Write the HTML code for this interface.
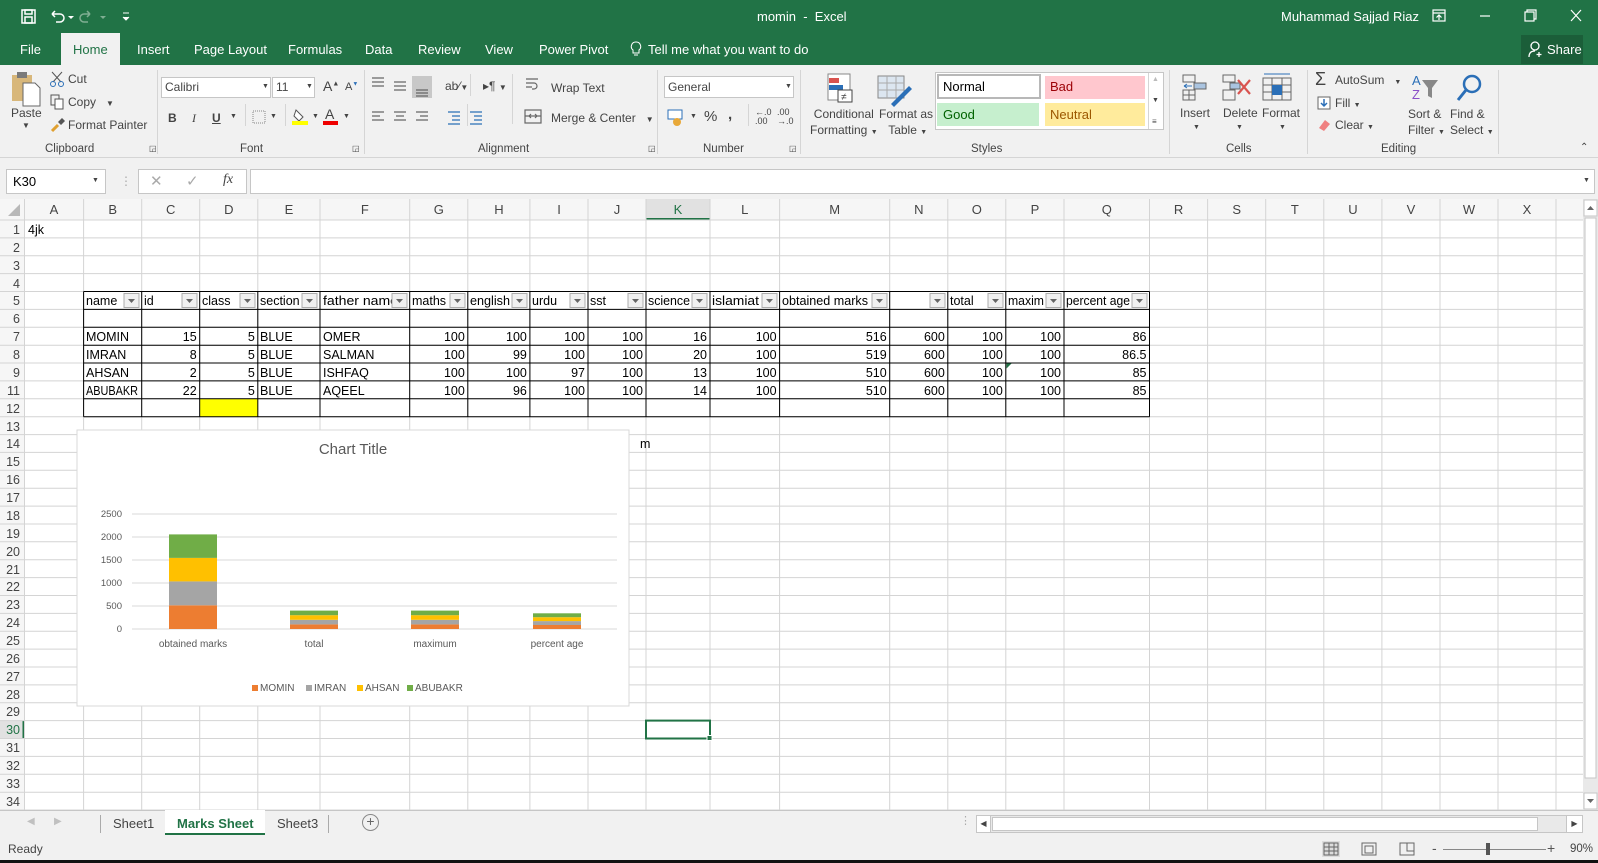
<!DOCTYPE html>
<html><head><meta charset="utf-8"><style>
*{margin:0;padding:0;box-sizing:border-box}
body{width:1598px;height:863px;overflow:hidden;background:#f1f1f1;font-family:"Liberation Sans",sans-serif;position:relative;color:#444}
.a{position:absolute;white-space:nowrap}
.w{color:#fff}
.f13{font-size:13px}.f12{font-size:12px}.f11{font-size:11.5px}
.box{position:absolute;background:#fff;border:1px solid #c6c6c6}
.sep{position:absolute;width:1px;background:#d5d5d5;top:70px;height:84px}
.ico{position:absolute}
</style></head><body>
<div class="a" style="left:0;top:0;width:1598px;height:65px;background:#217346"></div>
<svg class="ico" style="left:20px;top:8px" width="120" height="18" viewBox="0 0 120 18">
<g fill="none" stroke="#fff" stroke-width="1.5"><rect x="2" y="2" width="13" height="13"/><rect x="5" y="2" width="7" height="4"/><rect x="5" y="9" width="7" height="6"/>
<path d="M32 6h8a4 4 0 0 1 0 8h-4M32 6l3-3M32 6l3 3"/></g>
<path d="M48 8l3 3 3-3" fill="#fff"/><path d="M70 6h-6a4 4 0 0 0 0 8h4M70 6l-3-3M70 6l-3 3" fill="none" stroke="#7fae92" stroke-width="1.5"/><path d="M80 8l3 3 3-3" fill="#7fae92"/>
<path d="M103 5h6M103 9l3 3 3-3" stroke="#fff" fill="#fff"/></svg>
<div class="a w f13" style="left:757px;top:9px">momin&nbsp; -&nbsp; Excel</div>
<div class="a w f13" style="left:1281px;top:9px">Muhammad Sajjad Riaz</div>
<svg class="ico" style="left:1430px;top:6px" width="160" height="20"><g fill="none" stroke="#fff" stroke-width="1.2"><rect x="3" y="4" width="12" height="11"/><path d="M3 7h12M9 14V9M6.5 11.5L9 9l2.5 2.5"/><path d="M50 10h10"/><rect x="95" y="6" width="9" height="9"/><path d="M97 6V4h9v9h-2"/><path d="M141 4l10 11M151 4l-10 11"/></g></svg>
<div class="a" style="left:61px;top:33px;width:59px;height:32px;background:#f1f1f1"></div>
<div class="a w f13" style="left:20px;top:42px">File</div>
<div class="a f13" style="left:73px;top:42px;color:#217346">Home</div>
<div class="a w f13" style="left:137px;top:42px">Insert</div>
<div class="a w f13" style="left:194px;top:42px">Page Layout</div>
<div class="a w f13" style="left:288px;top:42px">Formulas</div>
<div class="a w f13" style="left:365px;top:42px">Data</div>
<div class="a w f13" style="left:418px;top:42px">Review</div>
<div class="a w f13" style="left:485px;top:42px">View</div>
<div class="a w f13" style="left:539px;top:42px">Power Pivot</div>
<svg class="ico" style="left:630px;top:41px" width="12" height="16"><path d="M6 1a4.5 4.5 0 0 0-3 8v3h6V9a4.5 4.5 0 0 0-3-8zM4 14h4" fill="none" stroke="#fff"/></svg>
<div class="a w f13" style="left:648px;top:42px">Tell me what you want to do</div>
<div class="a" style="left:1521px;top:35px;width:62px;height:29px;background:#1b5e39"></div>
<svg class="ico" style="left:1528px;top:41px" width="16" height="17"><circle cx="7" cy="5" r="4" fill="none" stroke="#fff" stroke-width="1.3"/><path d="M1 16c0-5 3-6 6-6M11 11v5M8.5 13.5h5" fill="none" stroke="#fff" stroke-width="1.3"/></svg>
<div class="a w f13" style="left:1547px;top:42px">Share</div>
<div class="a" style="left:0;top:157px;width:1598px;height:1px;background:#d5d5d5"></div>
<svg class="ico" style="left:10px;top:70px" width="34" height="40"><rect x="2" y="5" width="20" height="26" fill="#d8b77a"/><rect x="7" y="2" width="10" height="6" fill="#7a7a7a"/><path d="M13 13h12l5 5v18H13z" fill="#fff" stroke="#666"/></svg>
<div class="a f12" style="left:11px;top:106px">Paste</div><div class="a" style="left:22px;top:121px;font-size:8px">▼</div>
<svg class="ico" style="left:49px;top:71px" width="16" height="16"><path d="M3 1l9 10M13 1L4 11" stroke="#555" fill="none"/><circle cx="4" cy="13" r="2.5" fill="none" stroke="#2b6fb7"/><circle cx="12" cy="13" r="2.5" fill="none" stroke="#2b6fb7"/></svg>
<div class="a f12" style="left:68px;top:72px">Cut</div>
<svg class="ico" style="left:49px;top:94px" width="16" height="16"><rect x="2" y="1" width="8" height="10" fill="none" stroke="#555"/><rect x="6" y="5" width="8" height="10" fill="#fff" stroke="#555"/></svg>
<div class="a f12" style="left:68px;top:95px">Copy&nbsp;&nbsp;&nbsp;<span style="font-size:8px">▼</span></div>
<svg class="ico" style="left:50px;top:117px" width="16" height="16"><path d="M2 14l6-6" stroke="#e0a030" stroke-width="3"/><path d="M8 5l4-4 3 3-4 4z" fill="#555"/></svg>
<div class="a f12" style="left:68px;top:118px">Format Painter</div>
<div class="a f11" style="left:45px;top:143px">Clipboard</div>
<div class="a" style="left:149px;top:144px;font-size:8px">◲</div>
<div class="sep" style="left:157px"></div>
<div class="box" style="left:161px;top:77px;width:110px;height:21px"></div><div class="a f12" style="left:165px;top:80px">Calibri</div><div class="a" style="left:262px;top:83px;font-size:7px">▼</div>
<div class="box" style="left:272px;top:77px;width:43px;height:21px"></div><div class="a f12" style="left:276px;top:80px">11</div><div class="a" style="left:306px;top:83px;font-size:7px">▼</div>
<div class="a" style="left:323px;top:78px;font-size:14px">A<sup style="font-size:7px">▲</sup></div><div class="a" style="left:345px;top:81px;font-size:11px">A<sup style="font-size:6px;color:#2b6fb7">▼</sup></div>
<div class="a f12" style="left:168px;top:111px;font-weight:bold">B</div>
<div class="a f12" style="left:192px;top:111px;font-style:italic;font-family:'Liberation Serif'">I</div>
<div class="a f12" style="left:212px;top:111px;text-decoration:underline;font-weight:bold">U</div><div class="a" style="left:230px;top:113px;font-size:7px">▼</div>
<div class="a" style="left:245px;top:104px;width:1px;height:22px;background:#d5d5d5"></div>
<svg class="ico" style="left:252px;top:110px" width="14" height="14"><rect x="1" y="1" width="12" height="12" fill="none" stroke="#888" stroke-dasharray="1 1"/></svg><div class="a" style="left:270px;top:113px;font-size:7px">▼</div>
<div class="a" style="left:285px;top:104px;width:1px;height:22px;background:#d5d5d5"></div>
<svg class="ico" style="left:291px;top:107px" width="18" height="18"><path d="M5 3l7 7-4 4-5-5z" fill="#fff" stroke="#555"/><rect x="1" y="14" width="16" height="4" fill="#ffff00"/></svg><div class="a" style="left:312px;top:113px;font-size:7px">▼</div>
<div class="a" style="left:325px;top:106px;font-size:14px">A</div><div class="a" style="left:323px;top:121px;width:15px;height:4px;background:#e00"></div><div class="a" style="left:343px;top:113px;font-size:7px">▼</div>
<div class="a f11" style="left:240px;top:143px">Font</div><div class="a" style="left:352px;top:144px;font-size:8px">◲</div>
<div class="sep" style="left:364px"></div>
<svg class="ico" style="left:368px;top:74px" width="290" height="55"><g stroke="#666" stroke-width="1.2" fill="none">
<path d="M4 4h12M4 8h12M4 12h12"/><path d="M26 8h12M26 12h12M26 16h12"/><rect x="44" y="2" width="20" height="22" fill="#c8c8c8" stroke="none"/><path d="M48 16h12M48 19h12M48 22h12"/>
<path d="M4 38h12M4 42h8M4 46h12M26 38h12M28 42h8M26 46h12M48 38h12M52 42h8M48 46h12"/>
<path d="M80 38h12M84 42h8M84 46h8M80 50h12M102 38h12M106 42h8M106 46h8M102 50h12" stroke="#2b6fb7"/>
<path d="M158 5h12M158 9h8M158 13h6M166 9a3 3 0 0 1 0 6h-2"/><rect x="157" y="36" width="16" height="13"/><path d="M157 42h16M161 42l2-2M161 42l2 2M169 42l-2-2M169 42l-2 2"/></g></svg>
<div class="a f12" style="left:445px;top:79px">ab⁄<span style="font-size:8px">▼</span></div>
<div class="a f12" style="left:483px;top:79px">▸¶ <span style="font-size:8px">▼</span></div>
<div class="a" style="left:470px;top:74px;width:1px;height:22px;background:#d5d5d5"></div>
<div class="a" style="left:512px;top:74px;width:1px;height:50px;background:#d5d5d5"></div>
<div class="a" style="left:467px;top:104px;width:1px;height:22px;background:#d5d5d5"></div>
<div class="a f12" style="left:551px;top:81px">Wrap Text</div>
<div class="a f12" style="left:551px;top:111px">Merge &amp; Center&nbsp;&nbsp;&nbsp;<span style="font-size:8px">▼</span></div>
<div class="a f11" style="left:478px;top:143px">Alignment</div><div class="a" style="left:648px;top:144px;font-size:8px">◲</div>
<div class="sep" style="left:657px"></div>
<div class="box" style="left:664px;top:76px;width:130px;height:22px"></div><div class="a f12" style="left:668px;top:80px">General</div><div class="a" style="left:785px;top:83px;font-size:7px">▼</div>
<svg class="ico" style="left:667px;top:109px" width="22" height="18"><rect x="1" y="1" width="14" height="9" fill="#fff" stroke="#2b6fb7"/><circle cx="10" cy="13" r="4" fill="#e8a838"/></svg><div class="a" style="left:690px;top:113px;font-size:7px">▼</div>
<div class="a" style="left:704px;top:108px;font-size:15px">%</div><div class="a" style="left:728px;top:106px;font-size:15px;font-weight:bold">,</div>
<div class="a" style="left:748px;top:104px;width:1px;height:22px;background:#d5d5d5"></div>
<div class="a" style="left:755px;top:108px;font-size:9px;line-height:9px">←.0<br>.00</div><div class="a" style="left:777px;top:108px;font-size:9px;line-height:9px">.00<br>→.0</div>
<div class="a f11" style="left:703px;top:143px">Number</div><div class="a" style="left:789px;top:144px;font-size:8px">◲</div>
<div class="sep" style="left:800px"></div>
<svg class="ico" style="left:826px;top:72px" width="90" height="36"><rect x="2" y="2" width="22" height="26" fill="#fff" stroke="#888"/><rect x="3" y="6" width="10" height="5" fill="#d9534f"/><rect x="3" y="13" width="14" height="5" fill="#2b6fb7"/><rect x="12" y="18" width="14" height="12" fill="#fff" stroke="#444"/><text x="15" y="28" font-size="10" fill="#444">≠</text>
<rect x="52" y="4" width="26" height="22" fill="#dce6f0" stroke="#888"/><path d="M52 11h26M52 18h26M61 4v22M70 4v22" stroke="#aaa"/><path d="M65 32l18-18 3 3-18 18z" fill="#2b6fb7"/></svg>
<div class="a f12" style="left:810px;top:106px;text-align:center;line-height:16px">Conditional<br>Formatting <span style="font-size:7px">▼</span></div>
<div class="a f12" style="left:879px;top:106px;text-align:center;line-height:16px">Format as<br>&nbsp;Table <span style="font-size:7px">▼</span></div>
<div class="a" style="left:935px;top:72px;width:229px;height:58px;background:#fff;border:1px solid #c6c6c6"></div>
<div class="a" style="left:937px;top:74px;width:104px;height:25px;background:#fff;border:2px solid #b8b8b8"></div><div class="a f13" style="left:943px;top:79px;color:#000">Normal</div>
<div class="a" style="left:1045px;top:76px;width:100px;height:23px;background:#ffc7ce"></div><div class="a f13" style="left:1050px;top:79px;color:#9c0006">Bad</div>
<div class="a" style="left:937px;top:103px;width:102px;height:23px;background:#c6efce"></div><div class="a f13" style="left:943px;top:107px;color:#006100">Good</div>
<div class="a" style="left:1045px;top:103px;width:100px;height:23px;background:#ffeb9c"></div><div class="a f13" style="left:1050px;top:107px;color:#9c5700">Neutral</div>
<div class="a" style="left:1148px;top:73px;width:1px;height:56px;background:#d5d5d5"></div>
<div class="a" style="left:1152px;top:76px;font-size:7px;color:#bbb">▲</div><div class="a" style="left:1152px;top:97px;font-size:7px">▼</div><div class="a" style="left:1152px;top:117px;font-size:8px">≡</div>
<div class="a f11" style="left:971px;top:143px">Styles</div>
<div class="sep" style="left:1169px"></div>
<svg class="ico" style="left:1180px;top:72px" width="130" height="32"><g fill="none" stroke="#666"><rect x="3" y="3" width="12" height="7"/><rect x="3" y="18" width="12" height="10"/><path d="M3 23h12M9 18v10"/><rect x="14" y="11" width="12" height="6" fill="#aac4e0"/></g><path d="M4 14h8M4 14l3-2M4 14l3 2" stroke="#2b6fb7"/>
<g fill="none" stroke="#666"><rect x="43" y="3" width="12" height="7"/><rect x="43" y="18" width="12" height="10"/><rect x="50" y="11" width="10" height="6" fill="#aac4e0"/></g><path d="M58 8l12 14M70 8L58 22" stroke="#d9534f" stroke-width="2.2"/>
<g fill="none" stroke="#666"><rect x="83" y="6" width="28" height="22"/><path d="M83 13h28M83 20h28M92 6v22M102 6v22"/></g><rect x="92" y="13" width="10" height="10" fill="#2b6fb7"/><path d="M84 2h26" stroke="#2b6fb7"/></svg>
<div class="a f12" style="left:1180px;top:106px">Insert</div><div class="a" style="left:1193px;top:124px;font-size:7px">▼</div>
<div class="a f12" style="left:1223px;top:106px">Delete</div><div class="a" style="left:1236px;top:124px;font-size:7px">▼</div>
<div class="a f12" style="left:1262px;top:106px">Format</div><div class="a" style="left:1279px;top:124px;font-size:7px">▼</div>
<div class="a f11" style="left:1226px;top:143px">Cells</div>
<div class="sep" style="left:1307px"></div>
<div class="a" style="left:1315px;top:69px;font-size:18px">Σ</div><div class="a f12" style="left:1335px;top:73px">AutoSum&nbsp;&nbsp;&nbsp;<span style="font-size:7px">▼</span></div>
<svg class="ico" style="left:1317px;top:96px" width="14" height="14"><rect x="1" y="1" width="12" height="12" fill="#fff" stroke="#666"/><path d="M7 3v7M4 7l3 3 3-3" stroke="#2b6fb7" fill="none" stroke-width="1.5"/></svg><div class="a f12" style="left:1335px;top:96px">Fill <span style="font-size:7px">▼</span></div>
<svg class="ico" style="left:1317px;top:118px" width="14" height="14"><path d="M2 10l6-8 5 4-6 7z" fill="#f08080"/></svg><div class="a f12" style="left:1335px;top:118px">Clear <span style="font-size:7px">▼</span></div>
<svg class="ico" style="left:1410px;top:72px" width="80" height="32"><text x="2" y="13" font-size="13" fill="#2b6fb7" font-family="Liberation Sans">A</text><text x="2" y="27" font-size="13" fill="#8a4fc8" font-family="Liberation Sans">Z</text><path d="M12 8h16l-6 8v10l-4-2v-8z" fill="#888"/><circle cx="62" cy="12" r="8" fill="none" stroke="#2b6fb7" stroke-width="2.5"/><path d="M56 18l-8 10" stroke="#2b6fb7" stroke-width="3"/></svg>
<div class="a f12" style="left:1408px;top:106px;line-height:16px">Sort &amp;<br>Filter <span style="font-size:7px">▼</span></div>
<div class="a f12" style="left:1450px;top:106px;line-height:16px">Find &amp;<br>Select <span style="font-size:7px">▼</span></div>
<div class="a f11" style="left:1381px;top:143px">Editing</div>
<div class="sep" style="left:1498px"></div>
<div class="a" style="left:1580px;top:142px;font-size:10px">⌃</div>
<div class="box" style="left:6px;top:169px;width:100px;height:25px"></div><div class="a f13" style="left:13px;top:174px;color:#000">K30</div><div class="a" style="left:92px;top:177px;font-size:7px">▼</div>
<div class="a" style="left:120px;top:174px;color:#aaa;font-size:12px">⋮</div>
<div class="box" style="left:138px;top:169px;width:109px;height:25px"></div>
<div class="a" style="left:150px;top:172px;color:#aaa;font-size:15px">✕</div><div class="a" style="left:186px;top:172px;color:#aaa;font-size:15px">✓</div><div class="a" style="left:223px;top:172px;font-style:italic;font-family:'Liberation Serif';font-size:14px">fx</div>
<div class="box" style="left:250px;top:169px;width:1345px;height:25px"></div><div class="a" style="left:1583px;top:177px;font-size:7px">▼</div>
<svg class="ico" style="left:0;top:0" width="1598" height="863" viewBox="0 0 1598 863" font-family="Liberation Sans" font-size="12.5">
<rect x="0" y="199" width="1583" height="611" fill="#fff"/>
<rect x="0" y="199" width="1583" height="21" fill="#f6f6f6"/>
<rect x="0" y="220" width="24.5" height="590" fill="#f6f6f6"/>
<rect x="646" y="199" width="64" height="21" fill="#e1e1e1"/><rect x="646" y="218" width="64" height="2" fill="#217346"/>
<rect x="0" y="720.6" width="24.5" height="17.9" fill="#e1e1e1"/><rect x="22.5" y="720.6" width="2" height="17.9" fill="#217346"/>
<path d="M20 204v12h-12z" fill="#b8b8b8"/>
<g stroke="#d4d4d4" stroke-width="1">
<path d="M24.5 199V810M83.6 199V810M141.7 199V810M199.7 199V810M257.8 199V810M320 199V810M409.7 199V810M467.8 199V810M529.9 199V810M588 199V810M646 199V810M710 199V810M779.6 199V810M889.7 199V810M947.8 199V810M1005.8 199V810M1064 199V810M1149.5 199V810M1207.6 199V810M1265.7 199V810M1323.8 199V810M1381.9 199V810M1440 199V810M1498 199V810M1556 199V810"/>
<path d="M0 220H1583M0 237.9H1583M0 255.8H1583M0 273.6H1583M0 291.5H1583M0 309.4H1583M0 327.3H1583M0 345.2H1583M0 363H1583M0 380.9H1583M0 398.8H1583M0 416.7H1583M0 434.6H1583M0 452.4H1583M0 470.3H1583M0 488.2H1583M0 506.1H1583M0 524H1583M0 541.8H1583M0 559.7H1583M0 577.6H1583M0 595.5H1583M0 613.4H1583M0 631.2H1583M0 649.1H1583M0 667H1583M0 684.9H1583M0 702.8H1583M0 720.6H1583M0 738.5H1583M0 756.4H1583M0 774.3H1583M0 792.2H1583M0 810H1583"/>
</g>
<g fill="#444" text-anchor="middle" font-size="13">
<text x="54" y="214">A</text><text x="112.7" y="214">B</text><text x="170.7" y="214">C</text><text x="228.8" y="214">D</text><text x="289" y="214">E</text><text x="364.9" y="214">F</text><text x="438.8" y="214">G</text><text x="498.9" y="214">H</text><text x="559" y="214">I</text><text x="617" y="214">J</text><text x="678" y="214" fill="#217346">K</text><text x="744.8" y="214">L</text><text x="834.7" y="214">M</text><text x="918.8" y="214">N</text><text x="976.8" y="214">O</text><text x="1034.9" y="214">P</text><text x="1106.8" y="214">Q</text><text x="1178.6" y="214">R</text><text x="1236.7" y="214">S</text><text x="1294.8" y="214">T</text><text x="1352.9" y="214">U</text><text x="1411" y="214">V</text><text x="1469" y="214">W</text><text x="1527" y="214">X</text>
</g>
<g fill="#444" text-anchor="end" font-size="12.5">
<text x="20" y="234">1</text><text x="20" y="252">2</text><text x="20" y="270">3</text><text x="20" y="288">4</text><text x="20" y="305">5</text><text x="20" y="323">6</text><text x="20" y="341">7</text><text x="20" y="359">8</text><text x="20" y="377">9</text><text x="20" y="395">11</text><text x="20" y="413">12</text><text x="20" y="431">13</text><text x="20" y="448">14</text><text x="20" y="466">15</text><text x="20" y="484">16</text><text x="20" y="502">17</text><text x="20" y="520">18</text><text x="20" y="538">19</text><text x="20" y="556">20</text><text x="20" y="574">21</text><text x="20" y="591">22</text><text x="20" y="609">23</text><text x="20" y="627">24</text><text x="20" y="645">25</text><text x="20" y="663">26</text><text x="20" y="681">27</text><text x="20" y="699">28</text><text x="20" y="716">29</text><text x="20" y="734" fill="#217346">30</text><text x="20" y="752">31</text><text x="20" y="770">32</text><text x="20" y="788">33</text><text x="20" y="806">34</text>
</g>
<rect x="199.7" y="398.8" width="58.1" height="17.9" fill="#ffff00"/>
<g stroke="#000" stroke-width="1">
<path d="M83.6 291.5V416.7M141.7 291.5V416.7M199.7 291.5V416.7M257.8 291.5V416.7M320 291.5V416.7M409.7 291.5V416.7M467.8 291.5V416.7M529.9 291.5V416.7M588 291.5V416.7M646 291.5V416.7M710 291.5V416.7M779.6 291.5V416.7M889.7 291.5V416.7M947.8 291.5V416.7M1005.8 291.5V416.7M1064 291.5V416.7M1149.5 291.5V416.7"/>
<path d="M83.6 291.5H1149.5M83.6 309.4H1149.5M83.6 327.3H1149.5M83.6 345.2H1149.5M83.6 363H1149.5M83.6 380.9H1149.5M83.6 398.8H1149.5M83.6 416.7H1149.5"/>
</g>
<g fill="#000">
<text x="28" y="234">4jk</text>
<text x="86" y="305">name</text><text x="144" y="305">id</text><text x="202" y="305">class</text><text x="260" y="305">section</text><text x="323" y="305" textLength="75" lengthAdjust="spacingAndGlyphs">father name</text><text x="412" y="305">maths</text><text x="470" y="305" textLength="40" lengthAdjust="spacingAndGlyphs">english</text><text x="532" y="305">urdu</text><text x="590" y="305">sst</text><text x="648" y="305" textLength="42" lengthAdjust="spacingAndGlyphs">science</text><text x="712" y="305" textLength="47" lengthAdjust="spacingAndGlyphs">islamiat</text><text x="782" y="305" textLength="86" lengthAdjust="spacingAndGlyphs">obtained marks</text><text x="950" y="305">total</text><text x="1008" y="305" textLength="36" lengthAdjust="spacingAndGlyphs">maxim</text><text x="1066" y="305" textLength="64" lengthAdjust="spacingAndGlyphs">percent age</text>
<text x="86" y="341">MOMIN</text><text x="86" y="359">IMRAN</text><text x="86" y="377">AHSAN</text><text x="86" y="395" textLength="52" lengthAdjust="spacingAndGlyphs">ABUBAKR</text>
<text x="260" y="341">BLUE</text><text x="260" y="359">BLUE</text><text x="260" y="377">BLUE</text><text x="260" y="395">BLUE</text>
<text x="323" y="341">OMER</text><text x="323" y="359">SALMAN</text><text x="323" y="377">ISHFAQ</text><text x="323" y="395">AQEEL</text>
<text x="640" y="448">m</text>
</g>
<g fill="#f0f0f0" stroke="#acacac">
<rect x="124" y="293.5" width="15" height="14"/><rect x="182" y="293.5" width="15" height="14"/><rect x="240" y="293.5" width="15" height="14"/><rect x="302" y="293.5" width="15" height="14"/><rect x="392" y="293.5" width="15" height="14"/><rect x="450" y="293.5" width="15" height="14"/><rect x="512" y="293.5" width="15" height="14"/><rect x="570" y="293.5" width="15" height="14"/><rect x="628" y="293.5" width="15" height="14"/><rect x="692" y="293.5" width="15" height="14"/><rect x="762" y="293.5" width="15" height="14"/><rect x="872" y="293.5" width="15" height="14"/><rect x="930" y="293.5" width="15" height="14"/><rect x="988" y="293.5" width="15" height="14"/><rect x="1046" y="293.5" width="15" height="14"/><rect x="1132" y="293.5" width="15" height="14"/>
</g>
<g fill="#666">
<path d="M128 299h7l-3.5 4z"/><path d="M186 299h7l-3.5 4z"/><path d="M244 299h7l-3.5 4z"/><path d="M306 299h7l-3.5 4z"/><path d="M396 299h7l-3.5 4z"/><path d="M454 299h7l-3.5 4z"/><path d="M516 299h7l-3.5 4z"/><path d="M574 299h7l-3.5 4z"/><path d="M632 299h7l-3.5 4z"/><path d="M696 299h7l-3.5 4z"/><path d="M766 299h7l-3.5 4z"/><path d="M876 299h7l-3.5 4z"/><path d="M934 299h7l-3.5 4z"/><path d="M992 299h7l-3.5 4z"/><path d="M1050 299h7l-3.5 4z"/><path d="M1136 299h7l-3.5 4z"/>
</g>
<g fill="#000" text-anchor="end">
<text x="196.7" y="341">15</text><text x="196.7" y="359">8</text><text x="196.7" y="377">2</text><text x="196.7" y="395">22</text>
<text x="254.8" y="341">5</text><text x="254.8" y="359">5</text><text x="254.8" y="377">5</text><text x="254.8" y="395">5</text>
<text x="464.8" y="341">100</text><text x="464.8" y="359">100</text><text x="464.8" y="377">100</text><text x="464.8" y="395">100</text>
<text x="526.9" y="341">100</text><text x="526.9" y="359">99</text><text x="526.9" y="377">100</text><text x="526.9" y="395">96</text>
<text x="585" y="341">100</text><text x="585" y="359">100</text><text x="585" y="377">97</text><text x="585" y="395">100</text>
<text x="643" y="341">100</text><text x="643" y="359">100</text><text x="643" y="377">100</text><text x="643" y="395">100</text>
<text x="707" y="341">16</text><text x="707" y="359">20</text><text x="707" y="377">13</text><text x="707" y="395">14</text>
<text x="776.6" y="341">100</text><text x="776.6" y="359">100</text><text x="776.6" y="377">100</text><text x="776.6" y="395">100</text>
<text x="886.7" y="341">516</text><text x="886.7" y="359">519</text><text x="886.7" y="377">510</text><text x="886.7" y="395">510</text>
<text x="944.8" y="341">600</text><text x="944.8" y="359">600</text><text x="944.8" y="377">600</text><text x="944.8" y="395">600</text>
<text x="1002.8" y="341">100</text><text x="1002.8" y="359">100</text><text x="1002.8" y="377">100</text><text x="1002.8" y="395">100</text>
<text x="1061" y="341">100</text><text x="1061" y="359">100</text><text x="1061" y="377">100</text><text x="1061" y="395">100</text>
<text x="1146.5" y="341">86</text><text x="1146.5" y="359">86.5</text><text x="1146.5" y="377">85</text><text x="1146.5" y="395">85</text>
</g>
<path d="M1006.5 363.5h5l-5 5z" fill="#217346"/>
<rect x="646" y="720.6" width="64" height="17.9" fill="none" stroke="#217346" stroke-width="2"/><rect x="707" y="735.5" width="5" height="5" fill="#217346" stroke="#fff"/>
<rect x="77" y="430" width="552" height="276" fill="#fff" stroke="#d9d9d9"/>
<text x="353" y="454" text-anchor="middle" font-size="15" fill="#595959">Chart Title</text>
<g stroke="#d9d9d9"><path d="M132 514H617M132 537H617M132 560H617M132 583H617M132 606H617M132 629H617"/></g>
<g fill="#595959" font-size="9.5" text-anchor="end"><text x="122" y="517">2500</text><text x="122" y="540">2000</text><text x="122" y="563">1500</text><text x="122" y="586">1000</text><text x="122" y="609">500</text><text x="122" y="632">0</text></g>
<rect x="169" y="605.3" width="48" height="23.7" fill="#ed7d31"/><rect x="169" y="581.4" width="48" height="23.9" fill="#a5a5a5"/><rect x="169" y="557.9" width="48" height="23.5" fill="#ffc000"/><rect x="169" y="534.4" width="48" height="23.5" fill="#70ad47"/>
<rect x="290" y="624.4" width="48" height="4.6" fill="#ed7d31"/><rect x="290" y="619.8" width="48" height="4.6" fill="#a5a5a5"/><rect x="290" y="615.2" width="48" height="4.6" fill="#ffc000"/><rect x="290" y="610.6" width="48" height="4.6" fill="#70ad47"/>
<rect x="411" y="624.4" width="48" height="4.6" fill="#ed7d31"/><rect x="411" y="619.8" width="48" height="4.6" fill="#a5a5a5"/><rect x="411" y="615.2" width="48" height="4.6" fill="#ffc000"/><rect x="411" y="610.6" width="48" height="4.6" fill="#70ad47"/>
<rect x="533" y="625" width="48" height="4" fill="#ed7d31"/><rect x="533" y="621.1" width="48" height="3.9" fill="#a5a5a5"/><rect x="533" y="617.2" width="48" height="3.9" fill="#ffc000"/><rect x="533" y="613.3" width="48" height="3.9" fill="#70ad47"/>
<g fill="#595959" font-size="10" text-anchor="middle"><text x="193" y="647">obtained marks</text><text x="314" y="647">total</text><text x="435" y="647">maximum</text><text x="557" y="647">percent age</text></g>
<rect x="252" y="685" width="6" height="6" fill="#ed7d31"/><rect x="306" y="685" width="6" height="6" fill="#a5a5a5"/><rect x="357" y="685" width="6" height="6" fill="#ffc000"/><rect x="407" y="685" width="6" height="6" fill="#70ad47"/>
<g fill="#595959" font-size="10"><text x="260" y="691">MOMIN</text><text x="314" y="691">IMRAN</text><text x="365" y="691">AHSAN</text><text x="415" y="691">ABUBAKR</text></g>
<rect x="1583" y="199" width="15" height="611" fill="#e9e9e9"/><rect x="1584" y="200" width="13" height="16" fill="#fff" stroke="#c6c6c6"/><path d="M1587 210l3.5-4 3.5 4z" fill="#666"/>
<rect x="1585" y="218" width="11" height="560" fill="#fff" stroke="#c6c6c6"/>
<rect x="1584" y="793" width="13" height="16" fill="#fff" stroke="#c6c6c6"/><path d="M1587 799l3.5 4 3.5-4z" fill="#666"/>
</svg>
<div class="a" style="left:0;top:810px;width:1598px;height:28px;background:#f1f1f1;border-top:1px solid #c6c6c6"></div>
<div class="a" style="left:27px;top:816px;color:#c0c0c0;font-size:10px">◀</div><div class="a" style="left:54px;top:816px;color:#c0c0c0;font-size:10px">▶</div>
<div class="a" style="left:100px;top:815px;width:1px;height:18px;background:#aaa"></div>
<div class="a f13" style="left:113px;top:816px">Sheet1</div>
<div class="a" style="left:165px;top:810px;width:100px;height:25px;background:#fff;border-bottom:2px solid #217346"></div>
<div class="a f13" style="left:177px;top:816px;color:#217346;font-weight:bold">Marks Sheet</div>
<div class="a f13" style="left:277px;top:816px">Sheet3</div>
<div class="a" style="left:328px;top:815px;width:1px;height:18px;background:#aaa"></div>
<div class="a" style="left:362px;top:814px;width:17px;height:17px;border:1.5px solid #888;border-radius:50%;text-align:center;line-height:13px;font-size:14px;color:#666">+</div>
<div class="a" style="left:960px;top:814px;color:#aaa;font-size:11px">⋮</div>
<div class="a" style="left:976px;top:815px;width:607px;height:18px;background:#e9e9e9;border:1px solid #c6c6c6"></div>
<div class="a" style="left:977px;top:816px;width:14px;height:16px;background:#fff;border-right:1px solid #c6c6c6;font-size:8px;text-align:center;line-height:16px">◀</div>
<div class="a" style="left:992px;top:817px;width:546px;height:14px;background:#fff;border:1px solid #c6c6c6"></div>
<div class="a" style="left:1566px;top:816px;width:16px;height:16px;background:#fff;border-left:1px solid #c6c6c6;font-size:8px;text-align:center;line-height:16px">▶</div>
<div class="a" style="left:0;top:838px;width:1598px;height:22px;background:#f1f1f1"></div>
<div class="a f12" style="left:8px;top:842px">Ready</div>
<svg class="ico" style="left:1322px;top:841px" width="100" height="16"><g fill="none" stroke="#666"><rect x="2" y="2" width="14" height="12"/><path d="M2 6h14M2 10h14M7 2v12M12 2v12"/><rect x="40" y="2" width="14" height="12"/><rect x="43" y="5" width="8" height="7"/><rect x="78" y="2" width="14" height="12"/><path d="M85 2v8h7"/></g><rect x="0" y="0" width="18" height="16" fill="#666" opacity=".15"/></svg>
<div class="a" style="left:1432px;top:840px;font-size:14px;color:#555">-</div>
<div class="a" style="left:1443px;top:849px;width:103px;height:1px;background:#888"></div>
<div class="a" style="left:1486px;top:843px;width:4px;height:12px;background:#555"></div>
<div class="a" style="left:1547px;top:840px;font-size:14px;color:#555">+</div>
<div class="a f11" style="left:1570px;top:843px">90%</div>
<div class="a" style="left:0;top:860px;width:1598px;height:3px;background:#111"></div>
</body></html>
